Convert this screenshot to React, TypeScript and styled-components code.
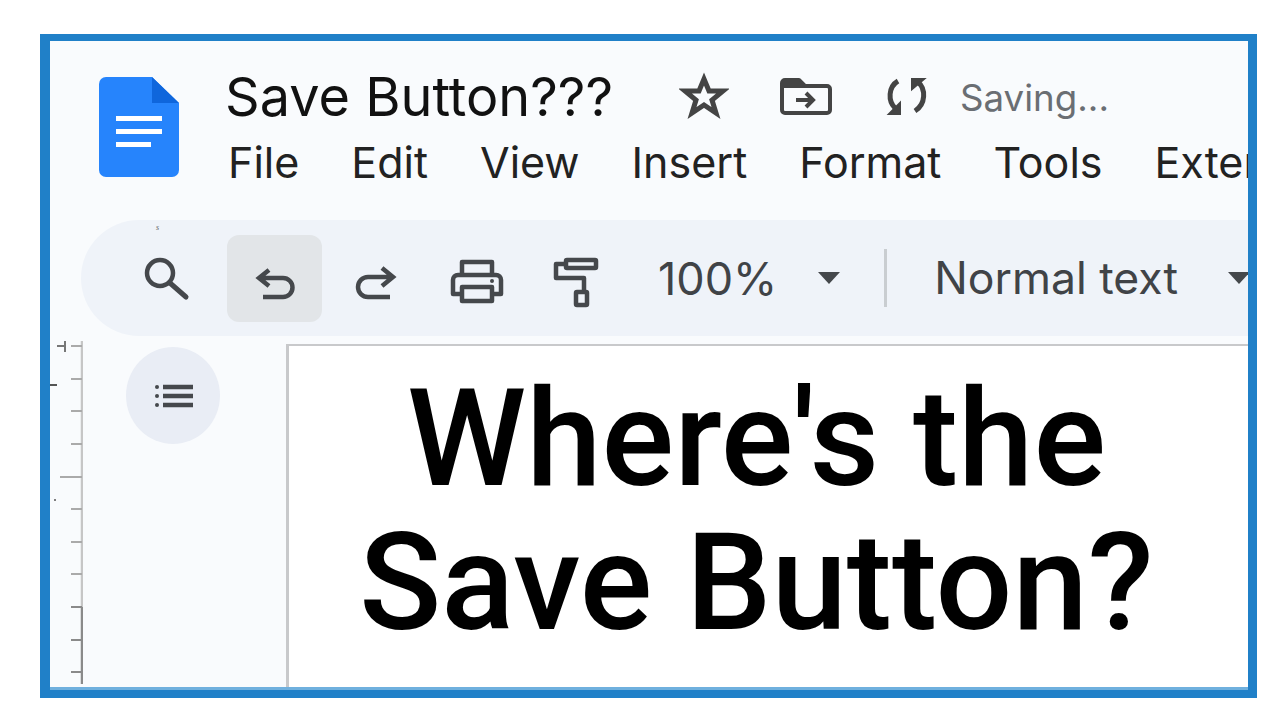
import React from "react";
import styled, { createGlobalStyle } from "styled-components";

const GlobalStyle = createGlobalStyle`
  html, body {
    margin: 0;
    padding: 0;
    background: #fff;
    overflow: hidden;
  }
  * {
    box-sizing: border-box;
  }
`;

const Page = styled.div`
  width: 1280px;
  height: 720px;
  padding: 34px 0 0 40px;
`;

const Frame = styled.div`
  width: 1217px;
  height: 664px;
  border-style: solid;
  border-color: #2080c8;
  border-width: 7px 9px 8px 10px;
  background: #f9fbfd;
  overflow: hidden;
  display: flex;
  flex-direction: column;
`;

const Header = styled.header`
  display: flex;
  height: 179px;
  padding: 36px 0 0 49px;
  flex: none;
`;

const Logo = styled.svg`
  width: 80px;
  height: 100px;
  flex: none;
`;

const TitleColumn = styled.div`
  margin-left: 46px;
  margin-top: -14px;
  display: flex;
  flex-direction: column;
  min-width: 0;
`;

const TitleRow = styled.div`
  display: flex;
  align-items: center;
  height: 66px;
`;

const DocTitle = styled.div`
  font-family: Inter, sans-serif;
  font-size: 54px;
  color: #111;
  white-space: nowrap;
`;

const TitleIcon = styled.svg<{ $left: number; $width: number }>`
  margin-left: ${(p) => p.$left}px;
  width: ${(p) => p.$width}px;
  height: 50px;
  flex: none;
`;

const SavingText = styled.div`
  margin: 3px 0 0 32px;
  font-family: Inter, sans-serif;
  font-size: 36.7px;
  color: #6a6e73;
  white-space: nowrap;
`;

const MenuRow = styled.nav`
  display: flex;
  gap: 52px;
  margin-top: 8px;
  margin-left: 3px;
  white-space: nowrap;
`;

const MenuItem = styled.span`
  font-family: Inter, sans-serif;
  font-size: 43px;
  line-height: 50px;
  color: #222;
`;

const Toolbar = styled.div`
  flex: none;
  height: 116px;
  margin-left: 31px;
  padding-left: 38px;
  border-radius: 58px 0 0 58px;
  background: #eff3f9;
  display: flex;
  align-items: center;
  white-space: nowrap;
  position: relative;
`;

const Speck = styled.span`
  position: absolute;
  left: 75px;
  top: 3px;
  font-family: "Liberation Serif", serif;
  font-style: italic;
  font-size: 8px;
  color: #666;
`;

const ToolButton = styled.div<{ $active?: boolean; $gap?: number }>`
  width: 95px;
  height: 87px;
  flex: none;
  margin-right: ${(p) => p.$gap ?? 6}px;
  border-radius: 12px;
  background: ${(p) => (p.$active ? "#e2e5e8" : "transparent")};
  display: flex;
  align-items: center;
  justify-content: center;
`;

const ToolIcon = styled.svg`
  width: 60px;
  height: 60px;
`;

const ZoomValue = styled.span`
  margin-left: 33px;
  font-family: Inter, sans-serif;
  font-size: 45px;
  color: #404347;
`;

const Caret = styled.span<{ $left: number }>`
  margin-left: ${(p) => p.$left}px;
  flex: none;
  width: 0;
  height: 0;
  border-left: 11px solid transparent;
  border-right: 11px solid transparent;
  border-top: 12px solid #45484c;
`;

const Divider = styled.span`
  margin-left: 44px;
  flex: none;
  width: 3px;
  height: 58px;
  background: #c9cdd1;
`;

const StyleValue = styled.span`
  margin-left: 47px;
  font-family: Inter, sans-serif;
  font-size: 44.5px;
  color: #404347;
`;

const Body = styled.div`
  flex: 1;
  min-height: 0;
  display: flex;
  border-bottom: 3px solid #6fb0de;
`;

const Ruler = styled.svg`
  width: 33px;
  height: 100%;
  flex: none;
`;

const OutlineColumn = styled.div`
  width: 203px;
  flex: none;
  padding: 11px 0 0 43px;
`;

const OutlineButton = styled.div`
  width: 94px;
  height: 97px;
  border-radius: 50%;
  background: #e9edf5;
  display: flex;
  align-items: center;
  justify-content: center;
`;

const DocPage = styled.main`
  flex: 1;
  margin-top: 8px;
  background: #fff;
  border-top: 2px solid #c8c9cb;
  border-left: 3px solid #c8c9cb;
  padding: 21px 24px 0 0;
  text-align: center;
`;

const Heading = styled.h1`
  margin: 0;
  font-family: Roboto, sans-serif;
  font-weight: 500;
  font-size: 135.5px;
  line-height: 144px;
  color: #000;
  white-space: nowrap;
`;

const ticks = [7, 40, 72, 105, 138, 170, 203, 235, 268, 301, 333];

export default function App() {
  return (
    <Page>
      <GlobalStyle />
      <Frame>
        <Header>
          <Logo viewBox="0 0 80 100">
            <path
              d="M7 0H53L80 26V93a7 7 0 0 1-7 7H7a7 7 0 0 1-7-7V7a7 7 0 0 1 7-7Z"
              fill="#2684fc"
            />
            <path d="M53 0L80 26H53Z" fill="#0f66dc" />
            <path d="M17 39H63V44H17ZM17 52H63V57H17ZM17 65H52V70H17Z" fill="#fff" />
          </Logo>
          <TitleColumn>
            <TitleRow>
              <DocTitle>Save Button???</DocTitle>
              <TitleIcon $left={66} $width={50} viewBox="0 0 50 50">
                <path
                  d="M25 8L30 20H44L33 29L37 42L25 34L13 42L17 29L6 20H20Z"
                  fill="none"
                  stroke="#444"
                  strokeWidth="5"
                  strokeLinejoin="miter"
                />
              </TitleIcon>
              <TitleIcon $left={51} $width={52} viewBox="0 0 52 50">
                <path
                  d="M2 12a3 3 0 0 1 3-3H19L25 15H47a3 3 0 0 1 3 3V39a3 3 0 0 1-3 3H5a3 3 0 0 1-3-3Z"
                  fill="none"
                  stroke="#444"
                  strokeWidth="4"
                  strokeLinejoin="round"
                />
                <path d="M2 9H19L25 17H2Z" fill="#444" />
                <path d="M16 29H33M26 22L33 29L26 36" fill="none" stroke="#444" strokeWidth="4" />
              </TitleIcon>
              <TitleIcon $left={54} $width={42} viewBox="0 0 42 50">
                <path d="M12 10C2 16 2 30 9 37" fill="none" stroke="#444" strokeWidth="5" />
                <path d="M3 43H14V32Z" fill="#444" stroke="#444" strokeWidth="2" />
                <path d="M29 40C40 33 40 18 32 11" fill="none" stroke="#444" strokeWidth="5" />
                <path d="M38 8H26V18Z" fill="#444" stroke="#444" strokeWidth="2" />
              </TitleIcon>
              <SavingText>Saving...</SavingText>
            </TitleRow>
            <MenuRow>
              {["File", "Edit", "View", "Insert", "Format", "Tools", "Extensions"].map((m) => (
                <MenuItem key={m}>{m}</MenuItem>
              ))}
            </MenuRow>
          </TitleColumn>
        </Header>
        <Toolbar>
          <Speck>s</Speck>
          <ToolButton $gap={13}>
            <ToolIcon viewBox="0 0 60 60">
              <circle cx="23" cy="25" r="13" fill="none" stroke="#45484c" strokeWidth="4.5" />
              <path d="M33 35L49 49" stroke="#45484c" strokeWidth="5" strokeLinecap="round" />
            </ToolIcon>
          </ToolButton>
          <ToolButton $active>
            <ToolIcon viewBox="0 0 60 60">
              <path
                d="M24 22L14 30L24 38M14 30H38a9.5 9.5 0 0 1 0 19H18"
                fill="none"
                stroke="#45484c"
                strokeWidth="4.5"
              />
            </ToolIcon>
          </ToolButton>
          <ToolButton>
            <ToolIcon viewBox="0 0 60 60">
              <path
                d="M36 20L47 29L36 38M47 29H22a10 10 0 0 0 0 20H44"
                fill="none"
                stroke="#45484c"
                strokeWidth="4.5"
              />
            </ToolIcon>
          </ToolButton>
          <ToolButton>
            <ToolIcon viewBox="0 0 60 60">
              <path
                d="M15 28V14H45V28M15 46H6V32a5 5 0 0 1 5-5H49a5 5 0 0 1 5 5V46H45M15 39H45V53H15Z"
                fill="none"
                stroke="#45484c"
                strokeWidth="4.5"
                strokeLinejoin="round"
              />
              <circle cx="45" cy="33" r="2" fill="#45484c" />
            </ToolIcon>
          </ToolButton>
          <ToolButton $gap={0}>
            <ToolIcon viewBox="0 0 60 60">
              <rect x="18" y="12" width="30" height="8" rx="1" fill="none" stroke="#45484c" strokeWidth="4.5" />
              <path
                d="M18 16H8V30H36V44"
                fill="none"
                stroke="#45484c"
                strokeWidth="4.5"
                strokeLinejoin="round"
              />
              <rect x="28" y="44" width="11" height="13" rx="1" fill="none" stroke="#45484c" strokeWidth="4.5" />
            </ToolIcon>
          </ToolButton>
          <ZoomValue>100%</ZoomValue>
          <Caret $left={41} />
          <Divider />
          <StyleValue>Normal text</StyleValue>
          <Caret $left={50} />
        </Toolbar>
        <Body>
          <Ruler viewBox="0 0 33 345">
            <path d="M32 2V268" stroke="#c6c6c6" strokeWidth="2.5" />
            <path d="M32 268V345" stroke="#8a8a8a" strokeWidth="2.5" />
            {ticks.map((y, i) => (
              <path
                key={y}
                d={`M${i === 4 ? 10 : 21} ${y}H32`}
                stroke={i >= 8 ? "#8a8a8a" : "#aaa"}
                strokeWidth="2"
              />
            ))}
            <path d="M7 7H15M15 2V13" stroke="#777" strokeWidth="2" />
            <path d="M0 46H7" stroke="#555" strokeWidth="2" />
            <circle cx="5" cy="161" r="1" fill="#555" />
          </Ruler>
          <OutlineColumn>
            <OutlineButton>
              <svg width="42" height="30" viewBox="0 0 42 30">
                <path d="M11 6H41M11 15H41M11 24H41" stroke="#45484c" strokeWidth="4.5" />
                <circle cx="5" cy="6" r="2" fill="#45484c" />
                <circle cx="5" cy="15" r="2" fill="#45484c" />
                <circle cx="5" cy="24" r="2" fill="#45484c" />
              </svg>
            </OutlineButton>
          </OutlineColumn>
          <DocPage>
            <Heading>
              Where's the
              <br />
              Save Button?
            </Heading>
          </DocPage>
        </Body>
      </Frame>
    </Page>
  );
}
